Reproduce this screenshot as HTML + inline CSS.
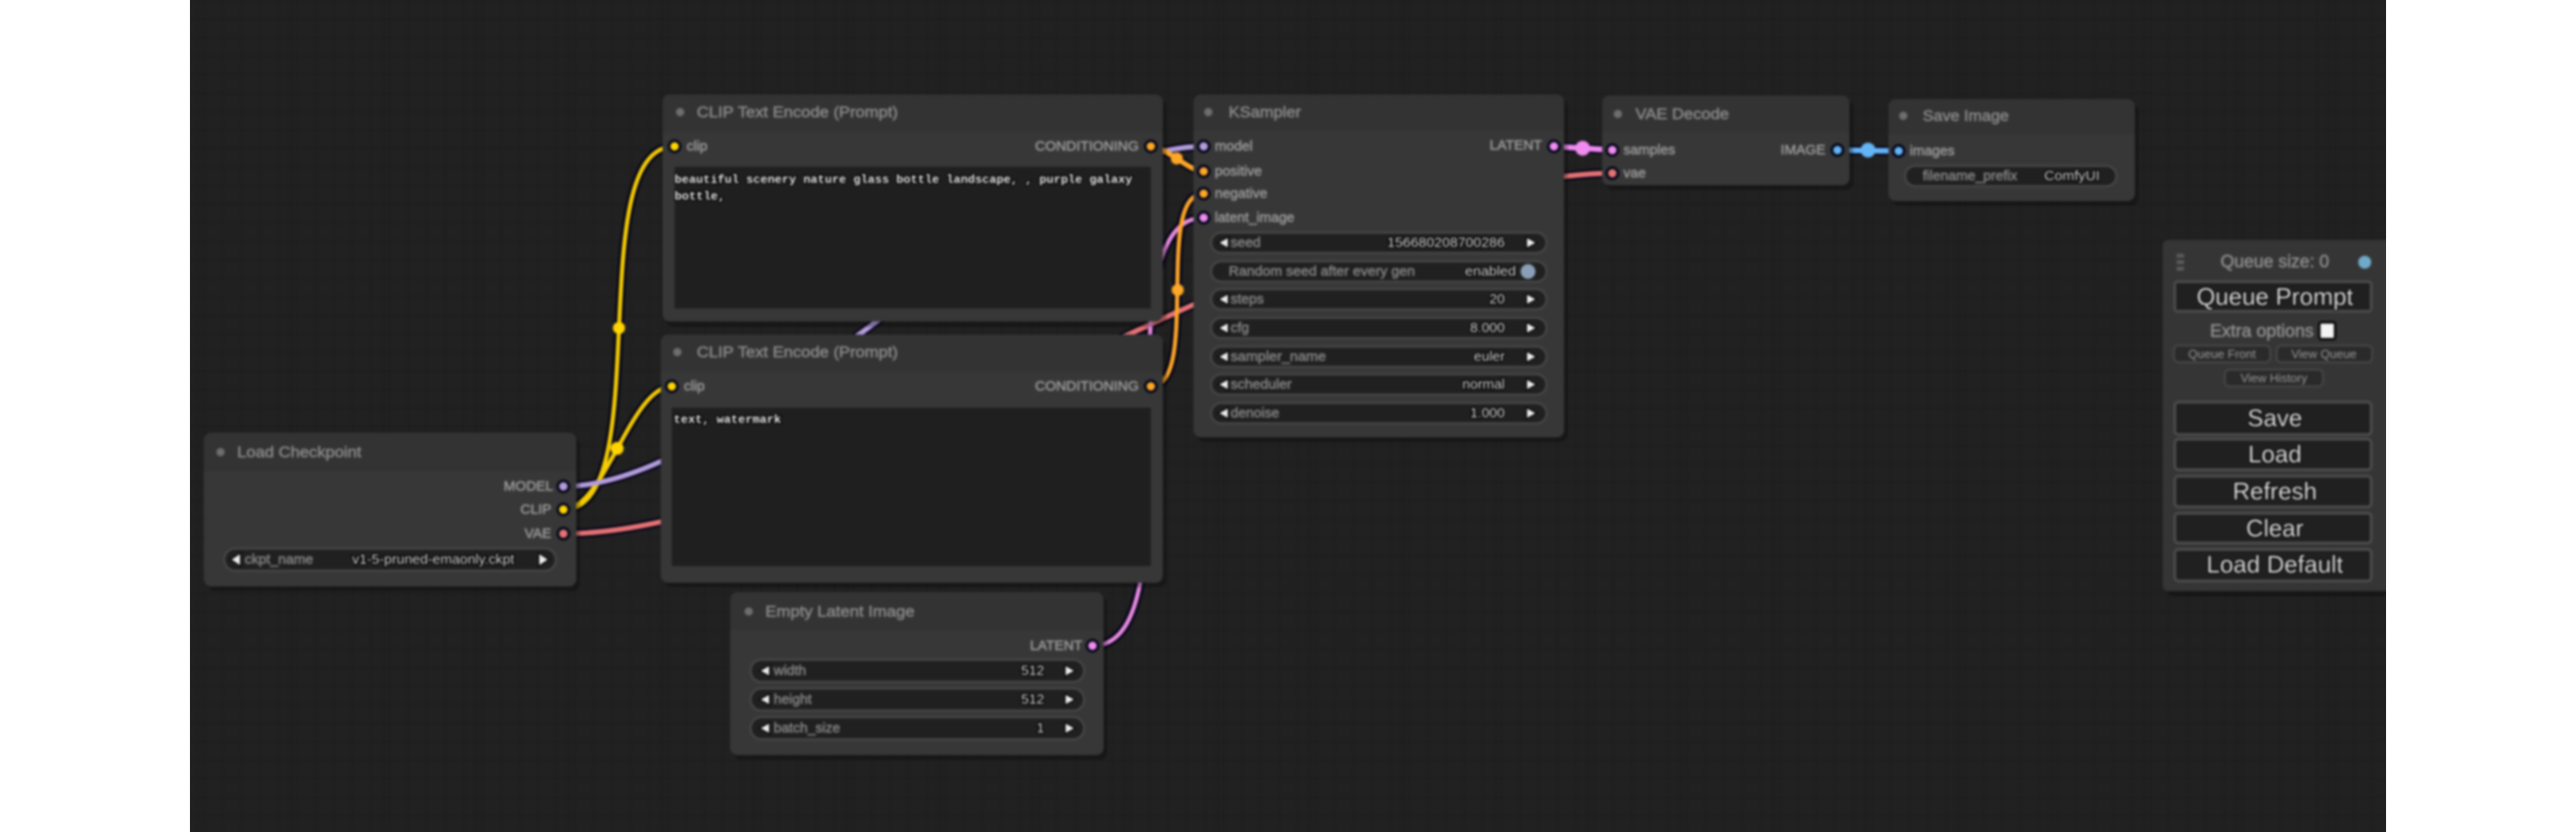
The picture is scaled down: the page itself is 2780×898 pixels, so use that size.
<!DOCTYPE html>
<html><head><meta charset="utf-8"><style>
html,body{margin:0;padding:0;background:#fff;width:2780px;height:898px;overflow:hidden}
#c{position:absolute;left:205px;top:0;width:2370px;height:898px;overflow:hidden;background:#212121}
svg{position:absolute;left:-205px;top:0;filter:blur(1.4px)}
text{font-family:"Liberation Sans",sans-serif;font-size:15px;dominant-baseline:central}
.t{fill:#8a8a8a;font-size:17px;stroke:#8a8a8a;stroke-width:.5px}
.l{fill:#9a9a9a;stroke:#9a9a9a;stroke-width:.5px}
.wl{fill:#858585;stroke:#858585;stroke-width:.5px}
.v{fill:#dcdcdc;paint-order:stroke;stroke:#000;stroke-width:2.5px}
.m{font-family:"Liberation Mono",monospace;font-size:13px;font-weight:bold;fill:#eee;paint-order:stroke;stroke:#000;stroke-width:2.5px}
.n{fill:#373737}.h{fill:#333}.s{fill:#000;opacity:.28}
.w{fill:#202020;stroke:#454545;stroke-width:2.5}
.a{fill:#eee;stroke:#000;stroke-width:2.5;paint-order:stroke}
.d{fill:#6e6e6e}
.b{fill:#202020;stroke:#4b4b4b;stroke-width:3}
.bt{fill:#dedede;font-size:26px;text-anchor:middle;paint-order:stroke;stroke:#000;stroke-width:2px}
.sb{fill:#2a2a2a;stroke:#474747;stroke-width:2}
.st{fill:#999;font-size:13px;text-anchor:middle}
.lk{fill:none;stroke-linecap:round}
</style></head><body><div id="c">
<svg width="2780" height="898" viewBox="0 0 2780 898" xmlns="http://www.w3.org/2000/svg">
<defs><pattern id="g" width="20" height="20" patternUnits="userSpaceOnUse"><path d="M0 0H20M0 0V20" stroke="#1c1c1c" stroke-width="2" fill="none"/></pattern>
<pattern id="g2" width="100" height="100" patternUnits="userSpaceOnUse" x="5"><path d="M9 0V100" stroke="#1b1b1b" stroke-width="3" fill="none"/></pattern></defs>
<rect x="205" width="2370" height="898" fill="url(#g)"/>
<rect x="205" width="2370" height="898" fill="url(#g2)" opacity=".5"/>

<!-- links: dark border -->
<g class="lk" stroke="#04041a" stroke-width="10">
<path d="M608 550C710 550 626 158 728 158"/>
<path d="M608 550C652 550 681 417 725 417"/>
<path d="M608 525C804 525 1103 158 1299 158"/>
<path d="M608 576C907 576 1441 187 1740 187"/>
<path d="M1179 697C1298 697 1180 235 1299 235"/>
<path d="M1242 158C1258 158 1283 185 1299 185"/>
<path d="M1242 417C1296 417 1245 209 1299 209"/>
<path d="M1677 158L1740 162"/>
<path d="M1983 162L2049 163"/>
</g>
<g class="lk" stroke-width="4.5">
<path stroke="#f5cd00" d="M608 550C710 550 626 158 728 158"/>
<path stroke="#f5cd00" d="M608 550C652 550 681 417 725 417"/>
<path stroke="#b39ddb" stroke-width="5.5" d="M608 525C804 525 1103 158 1299 158"/>
<path stroke="#e57373" stroke-width="5.5" d="M608 576C907 576 1441 187 1740 187"/>
<path stroke="#e98ce0" d="M1179 697C1298 697 1180 235 1299 235"/>
<path stroke="#ffa726" stroke-width="5.5" d="M1242 158C1258 158 1283 185 1299 185"/>
<path stroke="#ffa726" d="M1242 417C1296 417 1245 209 1299 209"/>
<path stroke="#f08cf0" stroke-width="6" d="M1677 158L1740 162"/>
<path stroke="#64b5f6" stroke-width="6" d="M1983 162L2049 163"/>
</g>
<circle cx="668" cy="354" r="6.5" fill="#ffd500"/><circle cx="666" cy="484" r="7" fill="#ffd500"/>
<circle cx="1271" cy="313" r="6.5" fill="#ffa726"/><circle cx="1270" cy="171" r="6.5" fill="#ffa726"/>
<circle cx="1708" cy="160" r="8" fill="#f08cf0"/><circle cx="2016" cy="162" r="8" fill="#64b5f6"/>

<!-- Shadows -->
<rect class="s" x="719" y="107" width="540" height="246" rx="8"/>
<rect class="s" x="717" y="366" width="542" height="268" rx="8"/>
<rect class="s" x="224" y="472" width="402" height="166" rx="8"/>
<rect class="s" x="792" y="644" width="403" height="176" rx="8"/>
<rect class="s" x="1292" y="107" width="400" height="370" rx="8"/>
<rect class="s" x="1733" y="108" width="267" height="97" rx="8"/>
<rect class="s" x="2042" y="112" width="266" height="110" rx="8"/>

<!-- CLIP 1 -->
<rect class="n" x="715" y="102" width="540" height="245" rx="8"/>
<path class="h" d="M715 143V110a8 8 0 0 1 8-8h524a8 8 0 0 1 8 8v33z"/>
<circle class="d" cx="734" cy="121" r="4.5"/>
<text class="t" x="752" y="121" textLength="217" lengthAdjust="spacingAndGlyphs">CLIP Text Encode (Prompt)</text>
<text class="l" x="741" y="158">clip</text>
<text class="l" x="1117" y="158" textLength="112" lengthAdjust="spacingAndGlyphs">CONDITIONING</text>
<rect x="728" y="180" width="514" height="153" fill="#1f1f1f"/>
<text class="m" x="728" y="194" textLength="494" lengthAdjust="spacingAndGlyphs">beautiful scenery nature glass bottle landscape, , purple galaxy</text>
<text class="m" x="728" y="212">bottle,</text>

<!-- CLIP 2 -->
<rect class="n" x="713" y="361" width="542" height="268" rx="8"/>
<path class="h" d="M713 402V369a8 8 0 0 1 8-8h526a8 8 0 0 1 8 8v33z"/>
<circle class="d" cx="731" cy="380" r="4.5"/>
<text class="t" x="752" y="380" textLength="217" lengthAdjust="spacingAndGlyphs">CLIP Text Encode (Prompt)</text>
<text class="l" x="738" y="417">clip</text>
<text class="l" x="1117" y="417" textLength="112" lengthAdjust="spacingAndGlyphs">CONDITIONING</text>
<rect x="725" y="440" width="517" height="171" fill="#1f1f1f"/>
<text class="m" x="727" y="453" textLength="116" lengthAdjust="spacingAndGlyphs">text, watermark</text>

<!-- Load Checkpoint -->
<rect class="n" x="220" y="467" width="402" height="166" rx="8"/>
<path class="h" d="M220 509V475a8 8 0 0 1 8-8h386a8 8 0 0 1 8 8v34z"/>
<circle class="d" cx="238" cy="488" r="4.5"/>
<text class="t" x="256" y="488" textLength="134" lengthAdjust="spacingAndGlyphs">Load Checkpoint</text>
<text class="l" x="597" y="525" text-anchor="end">MODEL</text>
<text class="l" x="595" y="550" text-anchor="end">CLIP</text>
<text class="l" x="595" y="576" text-anchor="end">VAE</text>
<rect class="w" x="242" y="592" width="358" height="24" rx="12"/>
<path class="a" d="M259 598l-9 6 9 6zM582 598l9 6-9 6z"/>
<text class="wl" x="264" y="604" textLength="74" lengthAdjust="spacingAndGlyphs">ckpt_name</text>
<text class="v" x="380" y="604" textLength="175" lengthAdjust="spacingAndGlyphs">v1-5-pruned-emaonly.ckpt</text>

<!-- Empty Latent -->
<rect class="n" x="788" y="639" width="403" height="176" rx="8"/>
<path class="h" d="M788 680V647a8 8 0 0 1 8-8h387a8 8 0 0 1 8 8v33z"/>
<circle class="d" cx="808" cy="660" r="4.5"/>
<text class="t" x="826" y="660" textLength="161" lengthAdjust="spacingAndGlyphs">Empty Latent Image</text>
<text class="l" x="1168" y="697" text-anchor="end">LATENT</text>
<rect class="w" x="810" y="712" width="360" height="24" rx="12"/>
<rect class="w" x="810" y="743" width="360" height="24" rx="12"/>
<rect class="w" x="810" y="774" width="360" height="24" rx="12"/>
<path class="a" d="M830 719l-9 5 9 5zM1150 719l9 5-9 5zM830 750l-9 5 9 5zM1150 750l9 5-9 5zM830 781l-9 5 9 5zM1150 781l9 5-9 5z"/>
<text class="wl" x="835" y="724">width</text><text class="v" x="1127" y="724" text-anchor="end">512</text>
<text class="wl" x="835" y="755">height</text><text class="v" x="1127" y="755" text-anchor="end">512</text>
<text class="wl" x="835" y="786">batch_size</text><text class="v" x="1127" y="786" text-anchor="end">1</text>

<!-- KSampler -->
<rect class="n" x="1288" y="102" width="400" height="370" rx="8"/>
<path class="h" d="M1288 141V110a8 8 0 0 1 8-8h384a8 8 0 0 1 8 8v31z"/>
<circle class="d" cx="1304" cy="121" r="4.5"/>
<text class="t" x="1326" y="121" textLength="78" lengthAdjust="spacingAndGlyphs">KSampler</text>
<text class="l" x="1311" y="158">model</text>
<text class="l" x="1311" y="185">positive</text>
<text class="l" x="1311" y="209">negative</text>
<text class="l" x="1311" y="235">latent_image</text>
<text class="l" x="1664" y="157" text-anchor="end">LATENT</text>
<g>
<rect class="w" x="1307" y="251" width="362" height="22" rx="11"/>
<rect class="w" x="1307" y="282" width="362" height="22" rx="11"/>
<rect class="w" x="1307" y="312" width="362" height="22" rx="11"/>
<rect class="w" x="1307" y="343" width="362" height="22" rx="11"/>
<rect class="w" x="1307" y="374" width="362" height="22" rx="11"/>
<rect class="w" x="1307" y="404" width="362" height="22" rx="11"/>
<rect class="w" x="1307" y="435" width="362" height="22" rx="11"/>
</g>
<path class="a" d="M1325 257l-9 5 9 5zM1648 257l9 5-9 5zM1325 318l-9 5 9 5zM1648 318l9 5-9 5zM1325 349l-9 5 9 5zM1648 349l9 5-9 5zM1325 380l-9 5 9 5zM1648 380l9 5-9 5zM1325 410l-9 5 9 5zM1648 410l9 5-9 5zM1325 441l-9 5 9 5zM1648 441l9 5-9 5z"/>
<text class="wl" x="1328" y="262">seed</text><text class="v" x="1497" y="262" textLength="127" lengthAdjust="spacingAndGlyphs">156680208700286</text>
<text class="wl" x="1326" y="293" textLength="201" lengthAdjust="spacingAndGlyphs">Random seed after every gen</text><text class="v" x="1581" y="293" textLength="55" lengthAdjust="spacingAndGlyphs">enabled</text>
<circle cx="1649" cy="293" r="8" fill="#8aa0b8"/>
<text class="wl" x="1328" y="323">steps</text><text class="v" x="1624" y="323" text-anchor="end">20</text>
<text class="wl" x="1328" y="354">cfg</text><text class="v" x="1624" y="354" text-anchor="end">8.000</text>
<text class="wl" x="1328" y="385" textLength="103" lengthAdjust="spacingAndGlyphs">sampler_name</text><text class="v" x="1624" y="385" text-anchor="end">euler</text>
<text class="wl" x="1328" y="415" textLength="66" lengthAdjust="spacingAndGlyphs">scheduler</text><text class="v" x="1624" y="415" text-anchor="end">normal</text>
<text class="wl" x="1328" y="446">denoise</text><text class="v" x="1624" y="446" text-anchor="end">1.000</text>

<!-- VAE Decode -->
<rect class="n" x="1729" y="103" width="267" height="97" rx="8"/>
<path class="h" d="M1729 142V111a8 8 0 0 1 8-8h251a8 8 0 0 1 8 8v31z"/>
<circle class="d" cx="1746" cy="123" r="4.5"/>
<text class="t" x="1765" y="123" textLength="101" lengthAdjust="spacingAndGlyphs">VAE Decode</text>
<text class="l" x="1752" y="162">samples</text>
<text class="l" x="1752" y="187">vae</text>
<text class="l" x="1970" y="162" text-anchor="end">IMAGE</text>

<!-- Save Image -->
<rect class="n" x="2038" y="107" width="266" height="110" rx="8"/>
<path class="h" d="M2038 145V115a8 8 0 0 1 8-8h250a8 8 0 0 1 8 8v30z"/>
<circle class="d" cx="2054" cy="125" r="4.5"/>
<text class="t" x="2075" y="125" textLength="93" lengthAdjust="spacingAndGlyphs">Save Image</text>
<text class="l" x="2061" y="163">images</text>
<rect class="w" x="2056" y="179" width="228" height="22" rx="11"/>
<text class="wl" x="2075" y="190" textLength="102" lengthAdjust="spacingAndGlyphs">filename_prefix</text>
<text class="v" x="2206" y="190" textLength="60" lengthAdjust="spacingAndGlyphs">ComfyUI</text>

<!-- Slots -->
<g stroke="#06081c" stroke-width="3">
<circle cx="728" cy="158" r="6" fill="#ffd500"/><circle cx="1242" cy="158" r="6" fill="#ffa726"/>
<circle cx="725" cy="417" r="6" fill="#ffd500"/><circle cx="1242" cy="417" r="6" fill="#ffa726"/>
<circle cx="608" cy="525" r="6" fill="#b39ddb"/><circle cx="608" cy="550" r="6" fill="#ffd500"/><circle cx="608" cy="576" r="6" fill="#e57373"/>
<circle cx="1179" cy="697" r="6" fill="#f08cf0"/>
<circle cx="1299" cy="158" r="6" fill="#b39ddb"/><circle cx="1299" cy="185" r="6" fill="#ffa726"/><circle cx="1299" cy="209" r="6" fill="#ffa726"/><circle cx="1299" cy="235" r="6" fill="#f08cf0"/>
<circle cx="1677" cy="158" r="6" fill="#f08cf0"/>
<circle cx="1740" cy="162" r="6" fill="#f08cf0"/><circle cx="1740" cy="187" r="6" fill="#e57373"/><circle cx="1983" cy="162" r="6" fill="#64b5f6"/>
<circle cx="2049" cy="163" r="6" fill="#64b5f6"/>
</g>

<!-- Menu -->
<rect x="2339" y="264" width="240" height="380" rx="8" fill="#000" opacity=".28"/>
<rect x="2334" y="259" width="250" height="379" rx="6" fill="#353535"/>
<rect x="2349" y="274" width="8" height="4" fill="#5c5c5c"/><rect x="2349" y="281" width="8" height="4" fill="#5c5c5c"/><rect x="2349" y="288" width="8" height="4" fill="#5c5c5c"/>
<text x="2455" y="283" fill="#8d8d8d" text-anchor="middle" style="font-size:19px;stroke:#8d8d8d;stroke-width:.5px">Queue size: 0</text>
<circle cx="2552" cy="283" r="7" fill="#6fa8c8"/>
<rect class="b" x="2347" y="304" width="212" height="32" rx="3"/>
<text class="bt" x="2455" y="320">Queue Prompt</text>
<text x="2385" y="358" fill="#8f8f8f" textLength="112" lengthAdjust="spacingAndGlyphs" style="font-size:19px;stroke:#8f8f8f;stroke-width:.5px">Extra options</text>
<rect x="2503" y="348" width="17" height="18" rx="2" fill="#f4f4f4" stroke="#000" stroke-width="2.5"/>
<rect class="sb" x="2346" y="373" width="104" height="18" rx="5"/><text class="st" x="2398" y="382">Queue Front</text>
<rect class="sb" x="2457" y="373" width="103" height="18" rx="5"/><text class="st" x="2508" y="382">View Queue</text>
<rect class="sb" x="2401" y="399" width="106" height="18" rx="5"/><text class="st" x="2454" y="408">View History</text>
<rect class="b" x="2347" y="434" width="212" height="35" rx="4"/><text class="bt" x="2455" y="451">Save</text>
<rect class="b" x="2347" y="474" width="212" height="33" rx="4"/><text class="bt" x="2455" y="490">Load</text>
<rect class="b" x="2347" y="514" width="212" height="33" rx="4"/><text class="bt" x="2455" y="530">Refresh</text>
<rect class="b" x="2347" y="554" width="212" height="32" rx="4"/><text class="bt" x="2455" y="570">Clear</text>
<rect class="b" x="2347" y="593" width="212" height="34" rx="4"/><text class="bt" x="2455" y="609">Load Default</text>
</svg>
</div></body></html>
